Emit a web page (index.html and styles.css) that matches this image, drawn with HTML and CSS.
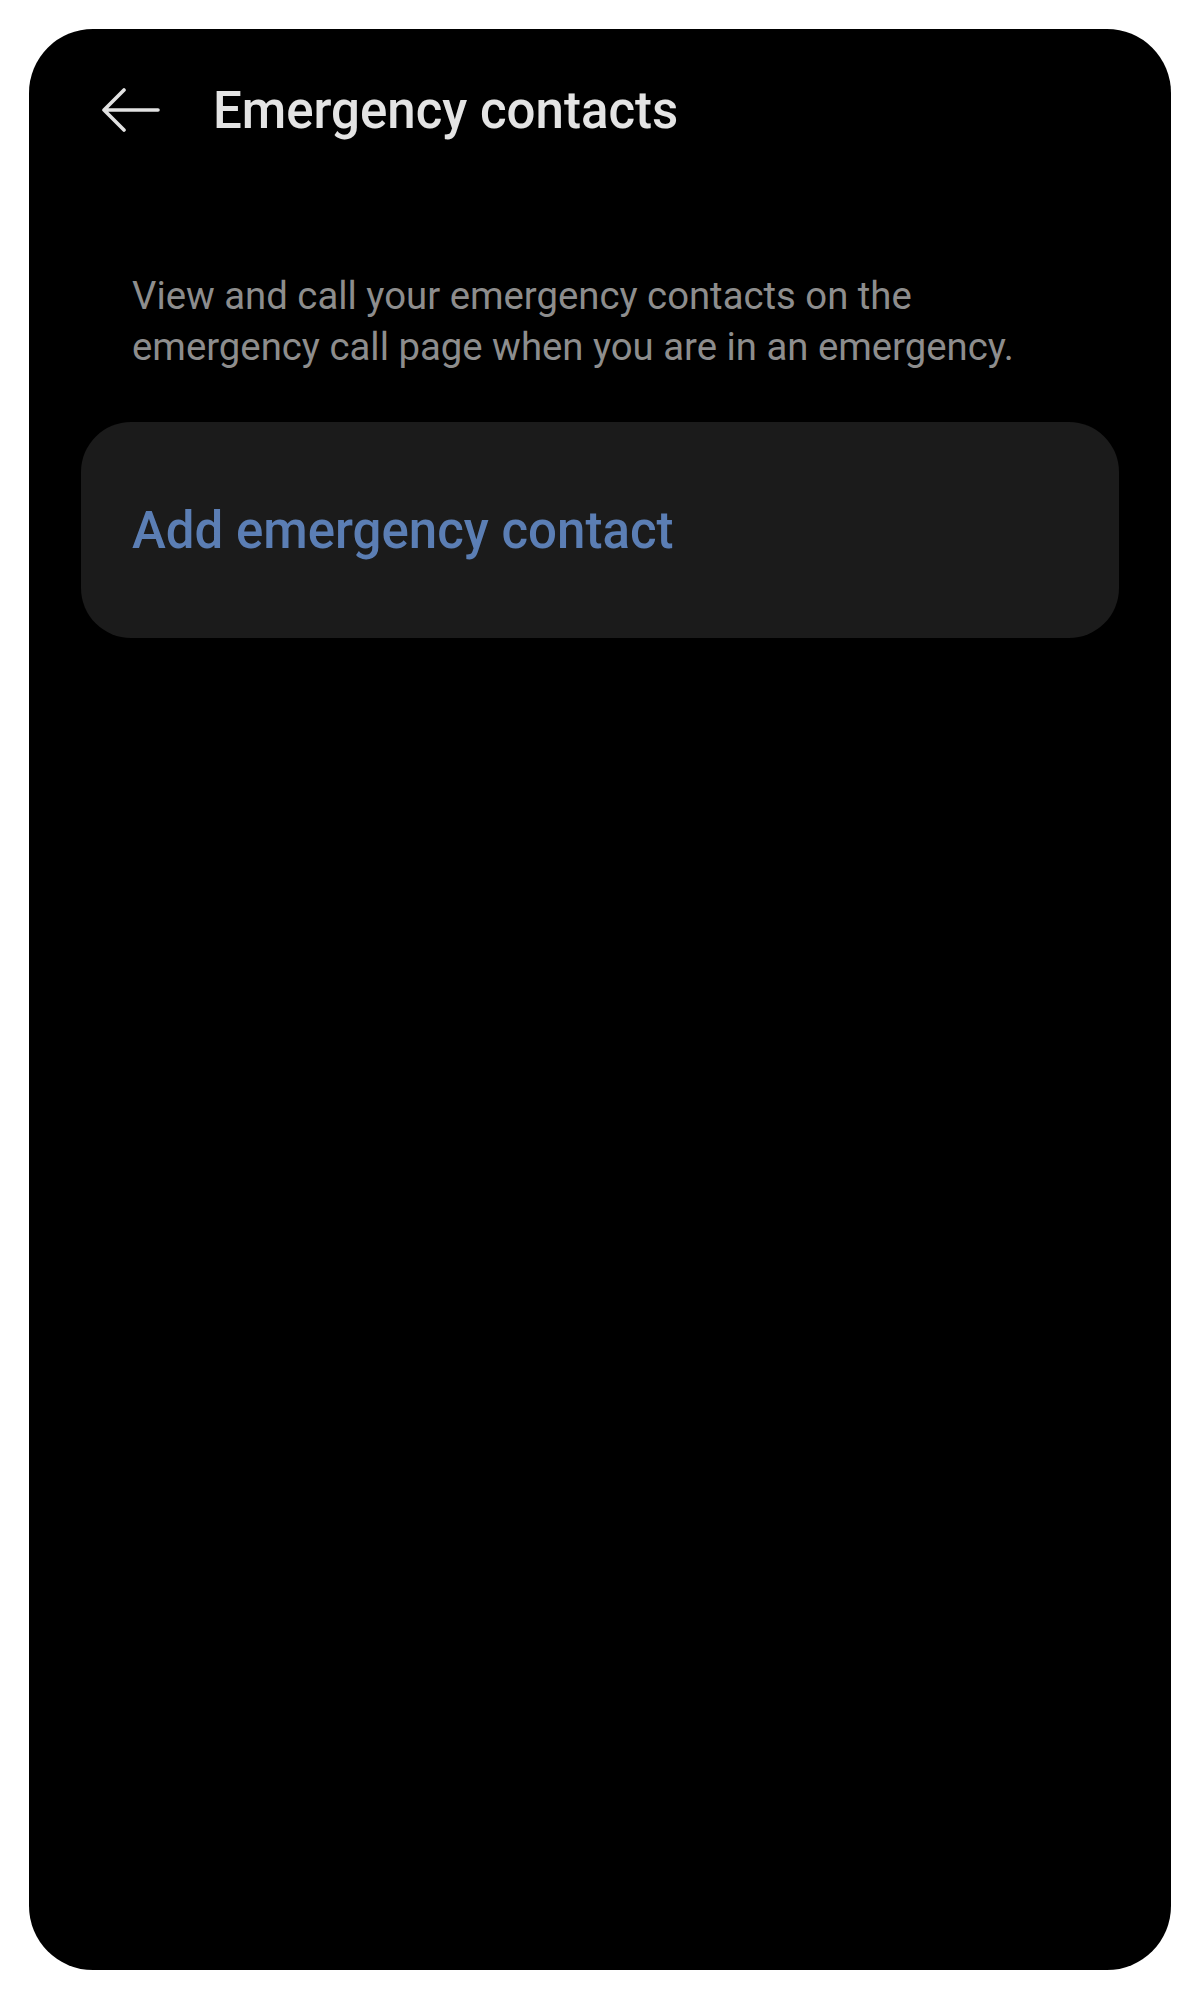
FILE: index.html
```html
<!DOCTYPE html>
<html lang="en">
<head>
<meta charset="utf-8">
<title>Emergency contacts</title>
<link rel="stylesheet" href="styles.css">
</head>
<body>
<div class="screen">
  <header class="header">
    <svg class="back" width="58" height="44" viewBox="0 0 58 44" aria-hidden="true">
      <path d="M2 22 H56 M22 2 L2 22 L22 42" fill="none" stroke="#e2e2e2" stroke-width="3.6" stroke-linecap="round" stroke-linejoin="round"/>
    </svg>
    <h1 class="title">Emergency contacts</h1>
  </header>
  <p class="desc">View and call your emergency contacts on the emergency call page when you are in an emergency.</p>
  <div class="card">
    <span class="card-link">Add emergency contact</span>
  </div>
</div>
</body>
</html>
```

FILE: styles.css
```css
html, body {
  margin: 0;
  padding: 0;
  background: #ffffff;
}
body {
  font-family: Roboto, "Noto Sans", sans-serif;
}
.screen {
  width: 1142px;
  height: 1941px;
  margin: 29px;
  background: #000000;
  border-radius: 64px;
  overflow: hidden;
}
.header {
  display: flex;
  align-items: center;
  height: 162px;
  padding-left: 73px;
}
.back {
  flex: none;
}
.title {
  margin: 0 0 0 53px;
  font-size: 51px;
  font-weight: 500;
  color: #e4e4e4;
  line-height: 1;
}
.desc {
  margin: 79px 0 0 0;
  padding-left: 103px;
  width: 900px;
  font-size: 38.3px;
  line-height: 51px;
  color: #8d8d8d;
}
.card {
  display: flex;
  align-items: center;
  margin: 50px 52px 0 52px;
  height: 216px;
  padding-left: 51px;
  background: #1b1b1b;
  border-radius: 50px;
}
.card-link {
  font-size: 51px;
  font-weight: 500;
  color: #5b7eb4;
}
```
